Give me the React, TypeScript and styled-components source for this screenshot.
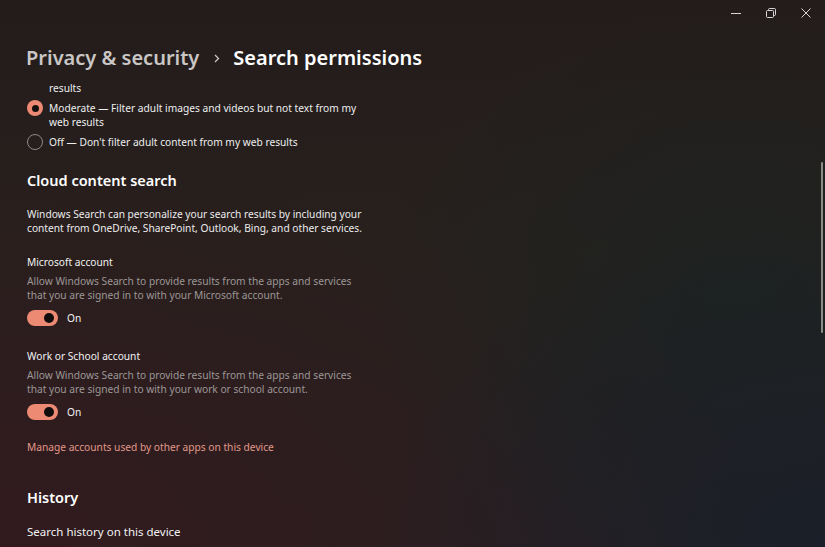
import React from 'react'
import styled, { createGlobalStyle } from 'styled-components'

//// global
const GlobalStyle = createGlobalStyle`
  html, body {
    margin: 0;
    padding: 0;
    background: #231d1b;
  }
  * {
    box-sizing: border-box;
  }
`

//// styles
const Window = styled.div`
  position: relative;
  width: 825px;
  height: 547px;
  overflow: hidden;
  font-family: 'Noto Sans', 'Open Sans', sans-serif;
  color: #f2f2f2;
  background:
    radial-gradient(ellipse 55% 60% at 100% 100%, #1a1f29 0%, rgba(26, 31, 41, 0) 100%),
    radial-gradient(ellipse 45% 55% at 90% 55%, #1d2220 0%, rgba(29, 34, 32, 0) 100%),
    radial-gradient(ellipse 80% 75% at 0% 100%, #311a1e 0%, rgba(49, 26, 30, 0) 100%),
    linear-gradient(180deg, #231c1b 0%, #27201d 45%, #2a1f20 100%);
`

const TitleBar = styled.div`
  display: flex;
  justify-content: flex-end;
  height: 26px;
  padding-right: 2px;
`

const CaptionButton = styled.div`
  width: 35px;
  height: 26px;
  display: flex;
  align-items: center;
  justify-content: center;
  color: #d6d6d6;
`

const Header = styled.div`
  display: flex;
  align-items: center;
  padding: 17px 0 0 26px;
  height: 47px;
  margin-bottom: 8px;
  font-size: 20px;
  line-height: 30px;
  font-weight: 600;
`

const Crumb = styled.span<{ $current?: boolean }>`
  color: ${p => (p.$current ? '#ffffff' : '#c9c6c5')};
  white-space: nowrap;
`

const Chevron = styled.span`
  display: flex;
  align-items: center;
  padding: 0 13px 0 15px;
  color: #c9c6c5;
`

const Content = styled.div`
  display: flex;
  flex-direction: column;
  align-items: flex-start;
  padding-left: 27px;
  font-size: 10.2px;
  line-height: 14px;
  white-space: nowrap;
`

const RadioGroup = styled.div`
  display: flex;
  flex-direction: column;
  gap: 6px;
`

const RadioRow = styled.div`
  display: flex;
  align-items: flex-start;
  gap: 6px;
`

const RadioCircle = styled.span<{ $checked?: boolean }>`
  flex: 0 0 auto;
  width: 16px;
  height: 16px;
  margin-top: -1px;
  border-radius: 50%;
  display: flex;
  align-items: center;
  justify-content: center;
  ${p =>
    p.$checked
      ? `background: #ec8a73; border: none;`
      : `background: transparent; border: 1px solid #8d8888;`}
`

const RadioDot = styled.span`
  width: 7px;
  height: 7px;
  border-radius: 50%;
  background: #141010;
`

const RadioLabel = styled.span<{ $indent?: boolean }>`
  color: #eeeeee;
  padding-left: ${p => (p.$indent ? '22px' : '0')};
`

const SectionTitle = styled.h2<{ $gap: number }>`
  margin: ${p => p.$gap}px 0 0;
  font-size: 14.5px;
  line-height: 22px;
  font-weight: 600;
  color: #ffffff;
`

const Paragraph = styled.p<{ $gap: number }>`
  margin: ${p => p.$gap}px 0 0;
  color: #ececec;
`

const SettingTitle = styled.div<{ $gap: number; $large?: boolean }>`
  margin-top: ${p => p.$gap}px;
  color: #f2f2f2;
  font-size: ${p => (p.$large ? '11.5px' : '10.2px')};
  line-height: ${p => (p.$large ? '16px' : '14px')};
`

const SettingDesc = styled.div`
  margin-top: 5px;
  color: #9c9796;
`

const ToggleRow = styled.div`
  display: flex;
  align-items: center;
  gap: 9px;
  margin-top: 8px;
  height: 16px;
`

const ToggleTrack = styled.span`
  width: 31px;
  height: 16px;
  border-radius: 8px;
  background: #ec8a73;
  display: flex;
  align-items: center;
  justify-content: flex-end;
  padding-right: 4px;
`

const ToggleKnob = styled.span`
  width: 10px;
  height: 10px;
  border-radius: 50%;
  background: #120d0d;
`

const ToggleLabel = styled.span`
  color: #f2f2f2;
`

const Link = styled.a`
  margin-top: 20px;
  color: #e0998a;
  text-decoration: none;
`

const ScrollThumb = styled.div`
  position: absolute;
  right: 2px;
  top: 162px;
  width: 2px;
  height: 171px;
  border-radius: 1px;
  background: #8c8c86;
`

//// parts
const Radio: React.FC<{ checked?: boolean; children: React.ReactNode }> = ({ checked, children }) => (
  <RadioRow>
    <RadioCircle $checked={checked}>{checked && <RadioDot />}</RadioCircle>
    <RadioLabel>{children}</RadioLabel>
  </RadioRow>
)

const Toggle: React.FC = () => (
  <ToggleRow>
    <ToggleTrack>
      <ToggleKnob />
    </ToggleTrack>
    <ToggleLabel>On</ToggleLabel>
  </ToggleRow>
)

const App: React.FC = () => {
  return (
    <Window>
      <GlobalStyle />
      <TitleBar>
        <CaptionButton>
          <svg width="10" height="10" viewBox="0 0 10 10">
            <path d="M0 5.5h10" stroke="currentColor" strokeWidth="1" />
          </svg>
        </CaptionButton>
        <CaptionButton>
          <svg width="10" height="10" viewBox="0 0 10 10" fill="none" stroke="currentColor" strokeWidth="1">
            <rect x="0.5" y="2.5" width="7" height="7" rx="1" />
            <path d="M2.5 2.5V1.5a1 1 0 0 1 1-1h5a1 1 0 0 1 1 1v5a1 1 0 0 1-1 1h-1" />
          </svg>
        </CaptionButton>
        <CaptionButton>
          <svg width="10" height="10" viewBox="0 0 10 10" stroke="currentColor" strokeWidth="1">
            <path d="M0.5 0.5l9 9M9.5 0.5l-9 9" />
          </svg>
        </CaptionButton>
      </TitleBar>

      <Header>
        <Crumb>Privacy &amp; security</Crumb>
        <Chevron>
          <svg width="6" height="9" viewBox="0 0 6 9" fill="none" stroke="currentColor" strokeWidth="1.3">
            <path d="M1 1l3.5 3.5L1 8" />
          </svg>
        </Chevron>
        <Crumb $current>Search permissions</Crumb>
      </Header>

      <Content>
        <RadioGroup>
          <RadioLabel $indent>results</RadioLabel>
          <Radio checked>
            Moderate — Filter adult images and videos but not text from my
            <br />
            web results
          </Radio>
          <Radio>Off — Don't filter adult content from my web results</Radio>
        </RadioGroup>

        <SectionTitle $gap={19}>Cloud content search</SectionTitle>
        <Paragraph $gap={16}>
          Windows Search can personalize your search results by including your
          <br />
          content from OneDrive, SharePoint, Outlook, Bing, and other services.
        </Paragraph>

        <SettingTitle $gap={20}>Microsoft account</SettingTitle>
        <SettingDesc>
          Allow Windows Search to provide results from the apps and services
          <br />
          that you are signed in to with your Microsoft account.
        </SettingDesc>
        <Toggle />

        <SettingTitle $gap={23}>Work or School account</SettingTitle>
        <SettingDesc>
          Allow Windows Search to provide results from the apps and services
          <br />
          that you are signed in to with your work or school account.
        </SettingDesc>
        <Toggle />

        <Link href="#">Manage accounts used by other apps on this device</Link>

        <SectionTitle $gap={32}>History</SectionTitle>
        <SettingTitle $gap={16} $large>
          Search history on this device
        </SettingTitle>
      </Content>

      <ScrollThumb />
    </Window>
  )
}

export default App
